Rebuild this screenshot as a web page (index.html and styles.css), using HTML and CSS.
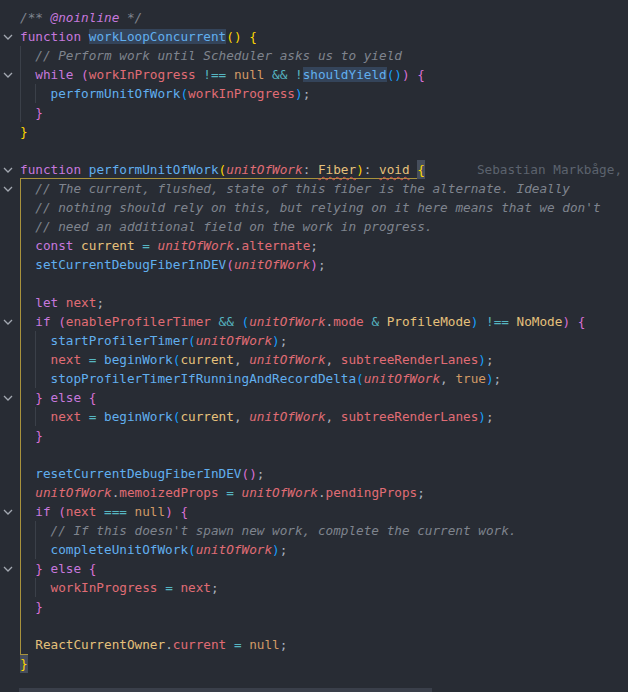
FILE: index.html
```html
<!DOCTYPE html>
<html>
<head>
<meta charset="utf-8">
<link rel="stylesheet" href="styles.css">
</head>
<body>
<div class="editor">
  <div class="ln"><span class="g"></span><span class="code"><span class="t"><span class="c">/** <span class="ck">@noinline</span> */</span></span></span></div>
  <div class="ln"><span class="g"><svg class="chev" viewBox="0 0 10 6"><polyline points="1,1 5,5 9,1"/></svg></span><span class="code"><span class="t"><span class="k">function</span> <span class="f hl">workLoopConcurrent</span><span class="b1">()</span> <span class="b1">{</span></span></span></div>
  <div class="ln"><span class="g"></span><span class="code"><span class="ig"></span><span class="t"><span class="c">// Perform work until Scheduler asks us to yield</span></span></span></div>
  <div class="ln"><span class="g"><svg class="chev" viewBox="0 0 10 6"><polyline points="1,1 5,5 9,1"/></svg></span><span class="code"><span class="ig"></span><span class="t"><span class="k">while</span> <span class="b2">(</span><span class="v">workInProgress</span> <span class="o">!==</span> <span class="n">null</span> <span class="o">&amp;&amp;</span> <span class="o">!</span><span class="f hl">shouldYield</span><span class="b3">()</span><span class="b2">)</span> <span class="b2">{</span></span></span></div>
  <div class="ln"><span class="g"></span><span class="code"><span class="ig"></span><span class="ig"></span><span class="t"><span class="f">performUnitOfWork</span><span class="b3">(</span><span class="v">workInProgress</span><span class="b3">)</span>;</span></span></div>
  <div class="ln"><span class="g"></span><span class="code"><span class="ig"></span><span class="t"><span class="b2">}</span></span></span></div>
  <div class="ln"><span class="g"></span><span class="code"><span class="t"><span class="b1">}</span></span></span></div>
  <div class="ln"><span class="g"></span><span class="code"></span></div>
  <div class="ln"><span class="g"><svg class="chev" viewBox="0 0 10 6"><polyline points="1,1 5,5 9,1"/></svg></span><span class="code"><span class="t top"><span class="k">function</span> <span class="f">performUnitOfWork</span><span class="b1">(</span><span class="p">unitOfWork</span>: <span class="y sq">Fiber</span><span class="b1">)</span>: <span class="y sq">void</span> <span class="b1 bm">{</span></span><span class="blame">Sebastian Markbåge,</span></span></div>
  <div class="ln"><span class="g"><svg class="chev" viewBox="0 0 10 6"><polyline points="1,1 5,5 9,1"/></svg></span><span class="code"><span class="ig act"></span><span class="t"><span class="c">// The current, flushed, state of this fiber is the alternate. Ideally</span></span></span></div>
  <div class="ln"><span class="g"></span><span class="code"><span class="ig act"></span><span class="t"><span class="c">// nothing should rely on this, but relying on it here means that we don't</span></span></span></div>
  <div class="ln"><span class="g"></span><span class="code"><span class="ig act"></span><span class="t"><span class="c">// need an additional field on the work in progress.</span></span></span></div>
  <div class="ln"><span class="g"></span><span class="code"><span class="ig act"></span><span class="t"><span class="k">const</span> <span class="y">current</span> <span class="o">=</span> <span class="p">unitOfWork</span>.<span class="v">alternate</span>;</span></span></div>
  <div class="ln"><span class="g"></span><span class="code"><span class="ig act"></span><span class="t"><span class="f">setCurrentDebugFiberInDEV</span><span class="b2">(</span><span class="p">unitOfWork</span><span class="b2">)</span>;</span></span></div>
  <div class="ln"><span class="g"></span><span class="code"><span class="ig act"></span></span></div>
  <div class="ln"><span class="g"></span><span class="code"><span class="ig act"></span><span class="t"><span class="k">let</span> <span class="v">next</span>;</span></span></div>
  <div class="ln"><span class="g"><svg class="chev" viewBox="0 0 10 6"><polyline points="1,1 5,5 9,1"/></svg></span><span class="code"><span class="ig act"></span><span class="t"><span class="k">if</span> <span class="b2">(</span><span class="v">enableProfilerTimer</span> <span class="o">&amp;&amp;</span> <span class="b3">(</span><span class="p">unitOfWork</span>.<span class="v">mode</span> <span class="o">&amp;</span> <span class="y">ProfileMode</span><span class="b3">)</span> <span class="o">!==</span> <span class="y">NoMode</span><span class="b2">)</span> <span class="b2">{</span></span></span></div>
  <div class="ln"><span class="g"></span><span class="code"><span class="ig act"></span><span class="ig"></span><span class="t"><span class="f">startProfilerTimer</span><span class="b3">(</span><span class="p">unitOfWork</span><span class="b3">)</span>;</span></span></div>
  <div class="ln"><span class="g"></span><span class="code"><span class="ig act"></span><span class="ig"></span><span class="t"><span class="v">next</span> <span class="o">=</span> <span class="f">beginWork</span><span class="b3">(</span><span class="y">current</span>, <span class="p">unitOfWork</span>, <span class="v">subtreeRenderLanes</span><span class="b3">)</span>;</span></span></div>
  <div class="ln"><span class="g"></span><span class="code"><span class="ig act"></span><span class="ig"></span><span class="t"><span class="f">stopProfilerTimerIfRunningAndRecordDelta</span><span class="b3">(</span><span class="p">unitOfWork</span>, <span class="n">true</span><span class="b3">)</span>;</span></span></div>
  <div class="ln"><span class="g"><svg class="chev" viewBox="0 0 10 6"><polyline points="1,1 5,5 9,1"/></svg></span><span class="code"><span class="ig act"></span><span class="t"><span class="b2">}</span> <span class="k">else</span> <span class="b2">{</span></span></span></div>
  <div class="ln"><span class="g"></span><span class="code"><span class="ig act"></span><span class="ig"></span><span class="t"><span class="v">next</span> <span class="o">=</span> <span class="f">beginWork</span><span class="b3">(</span><span class="y">current</span>, <span class="p">unitOfWork</span>, <span class="v">subtreeRenderLanes</span><span class="b3">)</span>;</span></span></div>
  <div class="ln"><span class="g"></span><span class="code"><span class="ig act"></span><span class="t"><span class="b2">}</span></span></span></div>
  <div class="ln"><span class="g"></span><span class="code"><span class="ig act"></span></span></div>
  <div class="ln"><span class="g"></span><span class="code"><span class="ig act"></span><span class="t"><span class="f">resetCurrentDebugFiberInDEV</span><span class="b2">()</span>;</span></span></div>
  <div class="ln"><span class="g"></span><span class="code"><span class="ig act"></span><span class="t"><span class="p">unitOfWork</span>.<span class="v">memoizedProps</span> <span class="o">=</span> <span class="p">unitOfWork</span>.<span class="v">pendingProps</span>;</span></span></div>
  <div class="ln"><span class="g"><svg class="chev" viewBox="0 0 10 6"><polyline points="1,1 5,5 9,1"/></svg></span><span class="code"><span class="ig act"></span><span class="t"><span class="k">if</span> <span class="b2">(</span><span class="v">next</span> <span class="o">===</span> <span class="n">null</span><span class="b2">)</span> <span class="b2">{</span></span></span></div>
  <div class="ln"><span class="g"></span><span class="code"><span class="ig act"></span><span class="ig"></span><span class="t"><span class="c">// If this doesn't spawn new work, complete the current work.</span></span></span></div>
  <div class="ln"><span class="g"></span><span class="code"><span class="ig act"></span><span class="ig"></span><span class="t"><span class="f">completeUnitOfWork</span><span class="b3">(</span><span class="p">unitOfWork</span><span class="b3">)</span>;</span></span></div>
  <div class="ln"><span class="g"><svg class="chev" viewBox="0 0 10 6"><polyline points="1,1 5,5 9,1"/></svg></span><span class="code"><span class="ig act"></span><span class="t"><span class="b2">}</span> <span class="k">else</span> <span class="b2">{</span></span></span></div>
  <div class="ln"><span class="g"></span><span class="code"><span class="ig act"></span><span class="ig"></span><span class="t"><span class="v">workInProgress</span> <span class="o">=</span> <span class="v">next</span>;</span></span></div>
  <div class="ln"><span class="g"></span><span class="code"><span class="ig act"></span><span class="t"><span class="b2">}</span></span></span></div>
  <div class="ln"><span class="g"></span><span class="code"><span class="ig act"></span></span></div>
  <div class="ln"><span class="g"></span><span class="code"><span class="ig act"></span><span class="t"><span class="y">ReactCurrentOwner</span>.<span class="v">current</span> <span class="o">=</span> <span class="n">null</span>;</span></span></div>
  <div class="ln"><span class="g"></span><span class="code"><span class="t"><span class="b1 bm bend">}</span></span></span></div>
</div>
<div class="hscroll"></div>
</body>
</html>
```

FILE: styles.css
```css
html, body {
  margin: 0;
  padding: 0;
}
body {
  position: relative;
  width: 628px;
  height: 692px;
  overflow: hidden;
  background: #282c34;
  color: #abb2bf;
  font-family: "DejaVu Sans Mono", "Liberation Mono", monospace;
  font-size: 12.7px;
}
.editor {
  padding-top: 8px;
}
.ln {
  display: flex;
  height: 19px;
  line-height: 19px;
}
.g {
  flex: none;
  width: 20px;
  display: flex;
  align-items: center;
  padding-left: 3px;
  box-sizing: border-box;
}
.chev {
  width: 10px;
  height: 6px;
  fill: none;
  stroke: #a3a8b1;
  stroke-width: 1.3;
}
.code {
  display: flex;
  white-space: pre;
  flex: 1;
  min-width: 0;
}
.ig {
  flex: none;
  width: 2ch;
  box-sizing: border-box;
  border-left: 1px solid #3b4049;
}
.ig.act {
  border-left-color: #a8923c;
}
.t {
  white-space: pre;
}
.top {
  box-shadow: inset 0 -1px 0 #a8923c;
}
.c { color: #7f848e; font-style: italic; }
.ck { color: #c678dd; }
.k { color: #c678dd; }
.f { color: #61afef; }
.v { color: #e06c75; }
.p { color: #e06c75; font-style: italic; }
.o { color: #56b6c2; }
.n { color: #d19a66; }
.y { color: #e5c07b; }
.b1 { color: #ffd700; }
.b2 { color: #da70d6; }
.b3 { color: #179fff; }
.hl { background: #34445a; }
.sq {
  text-decoration: underline wavy #d9534f;
  text-decoration-thickness: 1px;
  text-underline-offset: 2px;
}
.bm {
  display: inline-block;
  height: 19px;
  vertical-align: top;
  background: #464e5c;
}
.bend {
  box-shadow: inset 0 1px 0 #a8923c;
}
.blame {
  margin-left: 52px;
  color: #5c636e;
}
.hscroll {
  position: absolute;
  left: 19px;
  bottom: 0;
  width: 413px;
  height: 4px;
  background: #3a3f4a;
}
```
